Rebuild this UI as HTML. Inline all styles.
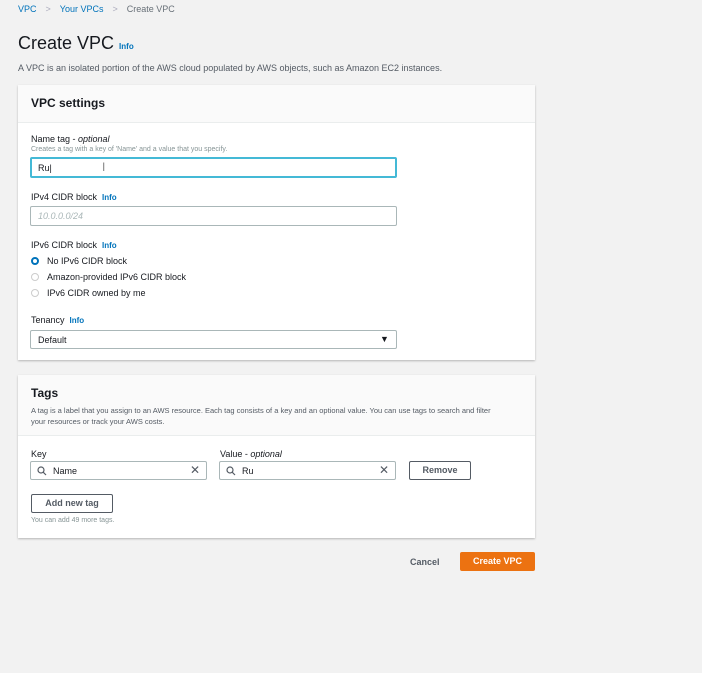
<!DOCTYPE html>
<html><head><style>
body{margin:0;width:702px;height:673px;background:#f2f2f2;font-family:"Liberation Sans",sans-serif;color:#16191f;position:relative;overflow:hidden}
.a{position:absolute;white-space:nowrap}
.l{color:#0073bb}
.s{font-size:9px}
.info{color:#0073bb;font-size:8px;font-weight:bold;margin-left:5px}
.panel{position:absolute;left:18px;width:517px;background:#fff;box-shadow:0 1px 2px rgba(0,0,0,.25)}
.hd{position:absolute;left:0;top:0;width:517px;background:#fafafa;border-bottom:1px solid #eaeded}
.in{position:absolute;background:#fff;border:1px solid #aab7b8;border-radius:2px;box-sizing:border-box}
.radio{position:absolute;width:8px;height:8px;border-radius:50%;border:1px solid #ccc;box-sizing:border-box;background:#fff}
.btn{position:absolute;border:1px solid #545b64;border-radius:2px;background:#fff;box-sizing:border-box;font-size:9px;font-weight:bold;color:#545b64;text-align:center}
</style></head><body>
<div class="a s" style="left:18px;top:4px"><span class="l">VPC</span><span style="color:#aab;margin:0 9px">&gt;</span><span class="l">Your VPCs</span><span style="color:#aab;margin:0 9px">&gt;</span><span style="color:#687078">Create VPC</span></div>
<div class="a" style="left:18px;top:33px;font-size:18px">Create VPC<span class="info">Info</span></div>
<div class="a s" style="left:18px;top:63px;color:#545b64">A VPC is an isolated portion of the AWS cloud populated by AWS objects, such as Amazon EC2 instances.</div>

<div class="panel" style="top:85px;height:275px">
 <div class="hd" style="height:37px"></div>
 <div class="a" style="left:13px;top:11px;font-size:12px;font-weight:bold">VPC settings</div>
 <div class="a s" style="left:13px;top:49px">Name tag - <i>optional</i></div>
 <div class="a" style="left:13px;top:61px;font-size:7px;color:#879596">Creates a tag with a key of 'Name' and a value that you specify.</div>
 <div class="in" style="left:12px;top:72px;width:367px;height:21px;border:2px solid #44b9d6"><span class="a s" style="left:6px;top:4px">Ru|</span><span class="a" style="left:70px;top:1px;font-size:12px;color:#888">I</span></div>
 <div class="a s" style="left:13px;top:107px">IPv4 CIDR block<span class="info">Info</span></div>
 <div class="in" style="left:12px;top:121px;width:367px;height:20px"><span class="a s" style="left:7px;top:4px;color:#aab7b8;font-style:italic">10.0.0.0/24</span></div>
 <div class="a s" style="left:13px;top:155px">IPv6 CIDR block<span class="info">Info</span></div>
 <div class="radio" style="left:13px;top:172px;border:2.5px solid #0073bb"></div><div class="a s" style="left:29px;top:171px">No IPv6 CIDR block</div>
 <div class="radio" style="left:13px;top:188px"></div><div class="a s" style="left:29px;top:187px">Amazon-provided IPv6 CIDR block</div>
 <div class="radio" style="left:13px;top:204px"></div><div class="a s" style="left:29px;top:203px">IPv6 CIDR owned by me</div>
 <div class="a s" style="left:13px;top:230px">Tenancy<span class="info">Info</span></div>
 <div class="in" style="left:12px;top:245px;width:367px;height:19px"><span class="a s" style="left:7px;top:4px">Default</span><span class="a" style="left:349px;top:3px;font-size:9px">▼</span></div>
</div>

<div class="panel" style="top:375px;height:163px">
 <div class="hd" style="height:60px"></div>
 <div class="a" style="left:13px;top:11px;font-size:12px;font-weight:bold">Tags</div>
 <div class="a" style="left:13px;top:30px;font-size:7.5px;color:#545b64;line-height:11px">A tag is a label that you assign to an AWS resource. Each tag consists of a key and an optional value. You can use tags to search and filter<br>your resources or track your AWS costs.</div>
 <div class="a s" style="left:13px;top:74px">Key</div>
 <div class="a s" style="left:202px;top:74px">Value - <i>optional</i></div>
 <div class="in" style="left:12px;top:86px;width:177px;height:19px"><svg class="a" style="left:6px;top:4px" width="10" height="10" viewBox="0 0 10 10"><circle cx="4" cy="4" r="3" fill="none" stroke="#545b64" stroke-width="1.2"/><path d="M6.2 6.2L9 9" stroke="#545b64" stroke-width="1.2"/></svg><span class="a s" style="left:22px;top:4px">Name</span><span class="a" style="left:159px;top:1px;font-size:12px;color:#545b64">✕</span></div>
 <div class="in" style="left:201px;top:86px;width:177px;height:19px"><svg class="a" style="left:6px;top:4px" width="10" height="10" viewBox="0 0 10 10"><circle cx="4" cy="4" r="3" fill="none" stroke="#545b64" stroke-width="1.2"/><path d="M6.2 6.2L9 9" stroke="#545b64" stroke-width="1.2"/></svg><span class="a s" style="left:22px;top:4px">Ru</span><span class="a" style="left:159px;top:1px;font-size:12px;color:#545b64">✕</span></div>
 <div class="btn" style="left:391px;top:86px;width:62px;height:19px;line-height:17px">Remove</div>
 <div class="btn" style="left:13px;top:119px;width:82px;height:19px;line-height:17px">Add new tag</div>
 <div class="a" style="left:13px;top:142px;font-size:7px;color:#879596">You can add 49 more tags.</div>
</div>

<div class="a s" style="left:410px;top:557px;font-weight:bold;color:#545b64">Cancel</div>
<div class="a" style="left:460px;top:552px;width:75px;height:19px;background:#ec7211;border-radius:2px;color:#fff;font-size:9px;font-weight:bold;text-align:center;line-height:19px">Create VPC</div>
</body></html>
